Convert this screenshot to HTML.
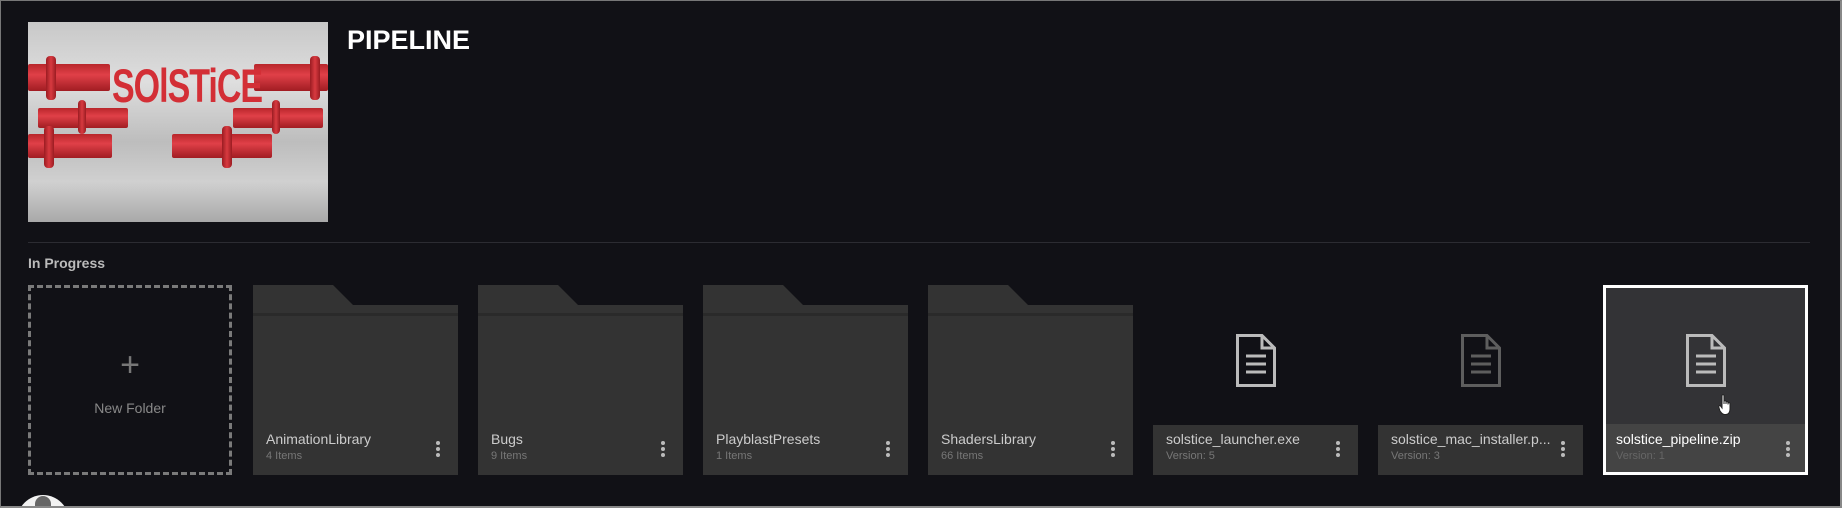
<!DOCTYPE html>
<html style="overflow:hidden;width:1842px;height:508px"><head><style>
*{margin:0;padding:0;box-sizing:border-box}
body{width:1842px;height:508px;background:#111116;font-family:"Liberation Sans",sans-serif;position:relative;overflow:hidden}
.frame{position:absolute;left:0;top:0;width:1842px;height:508px;border:1px solid #777;border-bottom:2px solid #888;border-right:2px solid #888}
.a{position:absolute}
.thumb{left:28px;top:22px;width:300px;height:200px;background:linear-gradient(180deg,#c8c8c8 0%,#dedede 30%,#bdbdbd 60%,#d0d0d0 80%,#a9a9a9 100%);overflow:hidden}
.pipe{position:absolute;background:linear-gradient(#b8262b,#e04048 40%,#a11c22);height:24px;border-radius:2px}
.fl{position:absolute;background:linear-gradient(90deg,#9b1c22,#d83a40,#9b1c22);width:10px;border-radius:4px}
.title{left:347px;top:25px;color:#fff;font-weight:bold;font-size:27px}
.sep{left:28px;top:242px;width:1782px;height:1px;background:#2c2c32}
.ip{left:28px;top:255px;color:#bbb;font-size:14px;font-weight:bold}
.nf{left:28px;top:285px;width:204px;height:190px;border:3px dashed #7a7a7a}
.card{top:285px;width:205px;height:190px}
.tab{position:absolute;left:0;top:0;width:205px;height:190px;background:#333;clip-path:polygon(0 0,80px 0,100px 20px,205px 20px,205px 190px,0 190px)}
.tl{position:absolute;left:0;top:28px;width:205px;height:3px;background:#2a2a2a}
.nm{position:absolute;left:13px;color:#ccc;font-size:14px;white-space:nowrap}
.sub{position:absolute;left:13px;color:#777;font-size:11px}
.dots{position:absolute;right:18px;width:4px}
.dots i{display:block;width:4px;height:4px;border-radius:2px;background:#bbb;margin-bottom:2px}
.lbl{position:absolute;left:0;top:140px;width:205px;height:50px;background:#333}
</style></head><body>
<div class="a thumb">
  <div class="pipe" style="left:0;top:42px;width:82px;height:27px"></div>
  <div class="fl" style="left:18px;top:34px;height:44px"></div>
  <div class="pipe" style="left:226px;top:42px;width:74px;height:27px"></div>
  <div class="fl" style="left:282px;top:34px;height:44px"></div>
  <div class="pipe" style="left:10px;top:86px;width:90px;height:20px"></div>
  <div class="fl" style="left:50px;top:78px;height:34px;width:8px"></div>
  <div class="pipe" style="left:205px;top:86px;width:90px;height:20px"></div>
  <div class="fl" style="left:244px;top:78px;height:34px;width:8px"></div>
  <div class="pipe" style="left:0;top:112px;width:84px;height:24px"></div>
  <div class="fl" style="left:16px;top:104px;height:42px"></div>
  <div class="pipe" style="left:144px;top:112px;width:100px;height:24px"></div>
  <div class="fl" style="left:194px;top:104px;height:42px"></div>
  <div style="position:absolute;left:84px;top:46px;color:#d32f36;font-size:34px;font-weight:bold;letter-spacing:-1px;transform:scaleY(1.4)">SOlSTiCE</div>
</div>
<div class="a title">PIPELINE</div>
<div class="a sep"></div>
<div class="a ip">In Progress</div>
<div class="a nf"><div style="position:absolute;left:0;right:0;top:60px;text-align:center;color:#777;font-size:34px;line-height:34px">+</div><div style="position:absolute;left:0;right:0;top:112px;text-align:center;color:#888;font-size:14px">New Folder</div></div>

<div class="a card" style="left:253px"><div class="tab"></div><div class="tl"></div><div class="nm" style="top:146px">AnimationLibrary</div><div class="sub" style="top:165px">4 Items</div><div class="dots" style="top:156px"><i></i><i></i><i></i></div></div>
<div class="a card" style="left:478px"><div class="tab"></div><div class="tl"></div><div class="nm" style="top:146px">Bugs</div><div class="sub" style="top:165px">9 Items</div><div class="dots" style="top:156px"><i></i><i></i><i></i></div></div>
<div class="a card" style="left:703px"><div class="tab"></div><div class="tl"></div><div class="nm" style="top:146px">PlayblastPresets</div><div class="sub" style="top:165px">1 Items</div><div class="dots" style="top:156px"><i></i><i></i><i></i></div></div>
<div class="a card" style="left:928px"><div class="tab"></div><div class="tl"></div><div class="nm" style="top:146px">ShadersLibrary</div><div class="sub" style="top:165px">66 Items</div><div class="dots" style="top:156px"><i></i><i></i><i></i></div></div>

<div class="a card" style="left:1153px">
<svg style="position:absolute;left:83px;top:49px" width="40" height="53" viewBox="0 0 40 53"><path d="M1.5 1.5H26L38.5 14V51.5H1.5Z" fill="none" stroke="#bbb" stroke-width="3"/><path d="M26 1.5V14H38.5" fill="none" stroke="#bbb" stroke-width="3"/><path d="M10 22H30M10 30H30M10 38H30" stroke="#bbb" stroke-width="3"/></svg>
<div class="lbl"></div><div class="nm" style="top:146px">solstice_launcher.exe</div><div class="sub" style="top:165px">Version: 5</div><div class="dots" style="top:156px"><i></i><i></i><i></i></div></div>

<div class="a card" style="left:1378px">
<svg style="position:absolute;left:83px;top:49px" width="40" height="53" viewBox="0 0 40 53"><path d="M1.5 1.5H26L38.5 14V51.5H1.5Z" fill="none" stroke="#5e5e5e" stroke-width="3"/><path d="M26 1.5V14H38.5" fill="none" stroke="#5e5e5e" stroke-width="3"/><path d="M10 22H30M10 30H30M10 38H30" stroke="#5e5e5e" stroke-width="3"/></svg>
<div class="lbl"></div><div class="nm" style="top:146px">solstice_mac_installer.p...</div><div class="sub" style="top:165px">Version: 3</div><div class="dots" style="top:156px"><i></i><i></i><i></i></div></div>

<div class="a card" style="left:1603px;background:#333336;border:3px solid #fff">
<svg style="position:absolute;left:80px;top:46px" width="40" height="53" viewBox="0 0 40 53"><path d="M1.5 1.5H26L38.5 14V51.5H1.5Z" fill="none" stroke="#bbb" stroke-width="3"/><path d="M26 1.5V14H38.5" fill="none" stroke="#bbb" stroke-width="3"/><path d="M10 22H30M10 30H30M10 38H30" stroke="#bbb" stroke-width="3"/></svg>
<div style="position:absolute;left:0;top:136px;width:199px;height:48px;background:#444"></div>
<div class="nm" style="top:143px;left:10px;color:#fff">solstice_pipeline.zip</div><div class="sub" style="top:162px;left:10px;color:#666">Version: 1</div><div class="dots" style="top:153px;right:15px"><i></i><i></i><i></i></div>
<svg style="position:absolute;left:112px;top:106px" width="16" height="22" viewBox="0 0 16 22"><path d="M4 1.5C4 0.5 6 0.5 6 1.5V10V7.5C6 6.5 8 6.5 8 7.5V10V8.5C8 7.5 10 7.5 10 8.5V10.5V9.5C10 8.5 12 8.5 12 9.5V15C12 18 10.5 20.5 8 20.5H6.5C4.5 20.5 3.5 19 2 17L0.8 13C0.5 12 1.8 11.2 2.5 12L4 14Z" fill="#fff" stroke="#222" stroke-width="1"/></svg>
</div>

<svg class="a" style="left:17px;top:495px" width="52" height="11" viewBox="0 0 52 11"><circle cx="26" cy="26" r="26" fill="#f2f2f2"/><path d="M18 11V9A8 8 0 0 1 34 9V11Z" fill="#666"/></svg>
<div class="frame"></div>
</body></html>
